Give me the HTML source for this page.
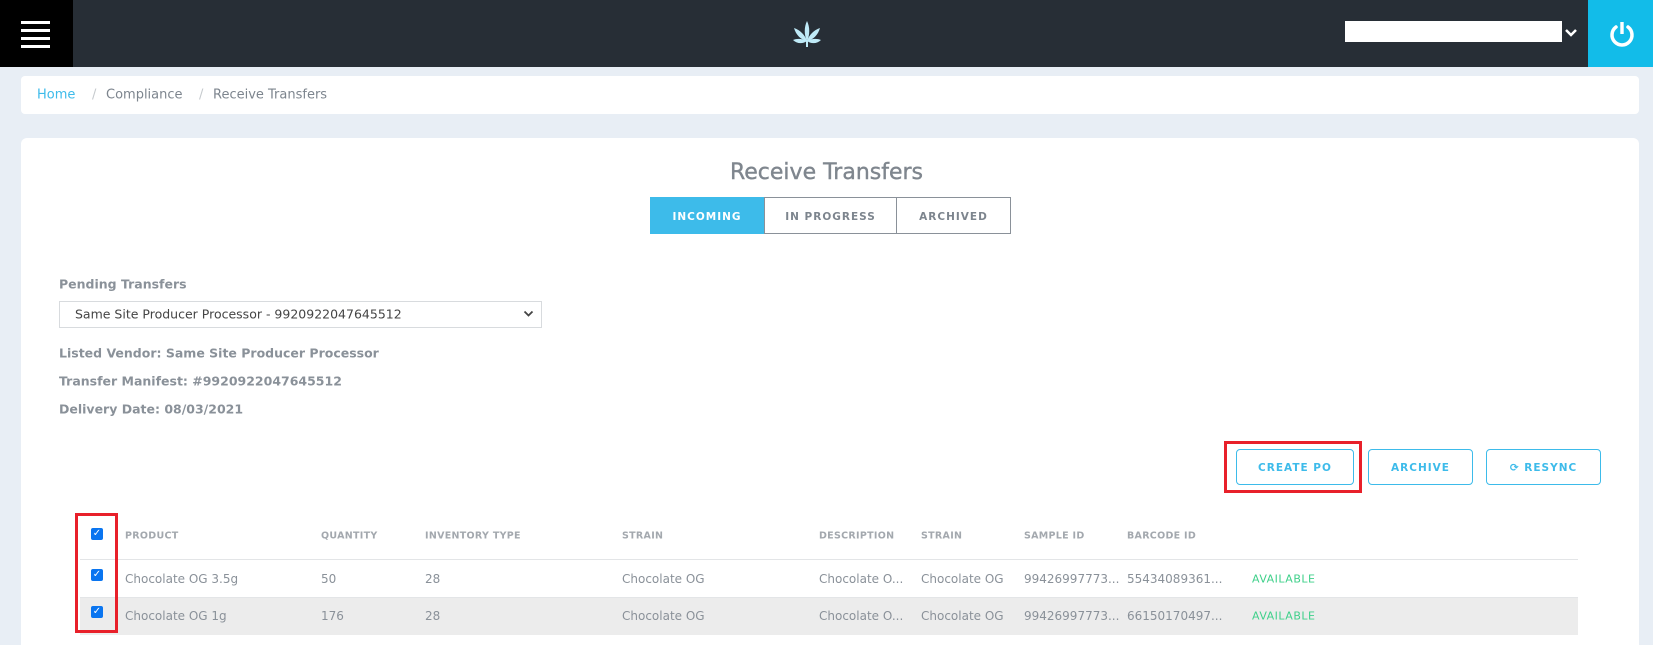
<!DOCTYPE html>
<html style="overflow:hidden;height:645px"><head><meta charset="utf-8"><style>
*{margin:0;padding:0;box-sizing:border-box}
body{width:1653px;height:645px;overflow:hidden;background:#e8eef5;font-family:"DejaVu Sans","Liberation Sans",sans-serif;color:#7d858e;position:relative}
.a{position:absolute;white-space:nowrap}
.hdr{left:0;top:0;width:1653px;height:67px;background:#272e36}
.ham{left:0;top:0;width:73px;height:67px;background:#000}
.ham i{position:absolute;left:21px;width:29px;height:3px;background:#fff}
.pw{left:1588px;top:0;width:65px;height:67px;background:#12bce9}
.bc{left:21px;top:76px;width:1618px;height:38px;background:#fff;border-radius:4px}
.card{left:21px;top:138px;width:1618px;height:507px;background:#fff;border-radius:6px 6px 0 0}
.t{font-size:13px;transform:translateY(-50%)}
.tab{top:197px;height:37px;border:1px solid #8a9199;font-size:10.5px;font-weight:bold;letter-spacing:1px;display:flex;align-items:center;justify-content:center;color:#7d858e;padding-top:3px}
.b{font-weight:bold;font-size:12.5px;color:#8a9199}
.btn{top:449px;height:36px;border:1px solid #3dbbea;border-radius:4px;color:#3dbbea;font-size:10.5px;font-weight:bold;letter-spacing:1px;display:flex;align-items:center;justify-content:center;padding-top:2px}
.th{font-size:9.5px;font-weight:bold;color:#a3a8ae;letter-spacing:.3px;top:536px;transform:translateY(-50%)}
.td{font-size:12px;color:#8a9199;transform:translateY(-50%)}
.cb{width:12px;height:12px;background:#0a75f0;border-radius:2px;color:#fff;font-size:10px;line-height:12px;text-align:center;font-weight:bold}
</style></head><body>
<div class="a hdr"></div>
<div class="a ham"><i style="top:21px"></i><i style="top:29px"></i><i style="top:37px"></i><i style="top:45px"></i></div>
<svg class="a" style="left:791px;top:19px" width="32" height="30" viewBox="0 0 32 30"><g fill="#bfeaf7"><path d="M16 2 C19 8 19 16 16 22 C13 16 13 8 16 2Z"/><path d="M3 9 C9 11 14 16 16 22 C10 21 5 16 3 9Z"/><path d="M29 9 C23 11 18 16 16 22 C22 21 27 16 29 9Z"/><path d="M2 21 C7 19 12 20 16 22 C12 25 6 25 2 21Z"/><path d="M30 21 C25 19 20 20 16 22 C20 25 26 25 30 21Z"/></g><rect x="15" y="21" width="2" height="7" fill="#bfeaf7"/></svg>
<div class="a" style="left:1345px;top:21px;width:217px;height:21px;background:#fff"></div>
<svg class="a" style="left:1564px;top:28px" width="14" height="10" viewBox="0 0 14 10"><path d="M2 2 L7 7 L12 2" stroke="#fff" stroke-width="2.5" fill="none"/></svg>
<div class="a pw"></div>
<svg class="a" style="left:1607px;top:19px" width="30" height="30" viewBox="0 0 30 30"><path d="M9 8 A10 10 0 1 0 21 8" stroke="#fff" stroke-width="3.5" fill="none" stroke-linecap="round"/><rect x="13.3" y="3" width="3.4" height="12" fill="#fff"/></svg>
<div class="a bc"></div>
<div class="a t" style="left:37px;top:95px;color:#3dbbea">Home</div>
<div class="a t" style="left:92px;top:95px;color:#c5c9cd">/</div>
<div class="a t" style="left:106px;top:95px">Compliance</div>
<div class="a t" style="left:199px;top:95px;color:#c5c9cd">/</div>
<div class="a t" style="left:213px;top:95px">Receive Transfers</div>
<div class="a card"></div>
<div class="a" style="left:0;width:1653px;top:160px;text-align:center;font-size:22px;color:#7f868e;-webkit-text-stroke:0.4px #7f868e">Receive Transfers</div>
<div class="a tab" style="left:650px;width:114px;background:#3dbbea;border-color:#3dbbea;color:#fff">INCOMING</div>
<div class="a tab" style="left:764px;width:133px">IN PROGRESS</div>
<div class="a tab" style="left:896px;width:115px">ARCHIVED</div>
<div class="a b t" style="left:59px;top:284px">Pending Transfers</div>
<div class="a" style="left:59px;top:301px;width:483px;height:27px;border:1px solid #d8dbde"></div>
<div class="a t" style="left:75px;top:314px;color:#444;font-size:12.5px">Same Site Producer Processor - 9920922047645512</div>
<svg class="a" style="left:523px;top:310px" width="11" height="8" viewBox="0 0 11 8"><path d="M1.5 1.5 L5.5 5.5 L9.5 1.5" stroke="#444" stroke-width="1.8" fill="none"/></svg>
<div class="a b t" style="left:59px;top:353px">Listed Vendor: Same Site Producer Processor</div>
<div class="a b t" style="left:59px;top:381px">Transfer Manifest: #9920922047645512</div>
<div class="a b t" style="left:59px;top:409px">Delivery Date: 08/03/2021</div>
<div class="a" style="left:1224px;top:441px;width:138px;height:52px;border:3px solid #e8202a"></div>
<div class="a btn" style="left:1236px;width:118px">CREATE PO</div>
<div class="a btn" style="left:1368px;width:105px">ARCHIVE</div>
<div class="a btn" style="left:1486px;width:115px">&#10227;&nbsp;RESYNC</div>
<div class="a" style="left:80px;top:559px;width:1498px;height:1px;background:#e3e5e7"></div>
<div class="a" style="left:80px;top:597px;width:1498px;height:38px;background:#ececec;border-top:1px solid #e3e5e7"></div>
<div class="a" style="left:75px;top:513px;width:43px;height:120px;border:3px solid #e8202a"></div>
<div class="a cb" style="left:91px;top:528px">✓</div>
<div class="a cb" style="left:91px;top:569px">✓</div>
<div class="a cb" style="left:91px;top:606px">✓</div>
<div class="a th" style="left:125px">PRODUCT</div>
<div class="a th" style="left:321px">QUANTITY</div>
<div class="a th" style="left:425px">INVENTORY TYPE</div>
<div class="a th" style="left:622px">STRAIN</div>
<div class="a th" style="left:819px">DESCRIPTION</div>
<div class="a th" style="left:921px">STRAIN</div>
<div class="a th" style="left:1024px">SAMPLE ID</div>
<div class="a th" style="left:1127px">BARCODE ID</div>
<div class="a td" style="left:125px;top:579px">Chocolate OG 3.5g</div>
<div class="a td" style="left:321px;top:579px">50</div>
<div class="a td" style="left:425px;top:579px">28</div>
<div class="a td" style="left:622px;top:579px">Chocolate OG</div>
<div class="a td" style="left:819px;top:579px">Chocolate O...</div>
<div class="a td" style="left:921px;top:579px">Chocolate OG</div>
<div class="a td" style="left:1024px;top:579px">99426997773...</div>
<div class="a td" style="left:1127px;top:579px">55434089361...</div>
<div class="a td" style="left:1252px;top:579px;color:#3fd08a;font-size:11px;letter-spacing:.5px">AVAILABLE</div>
<div class="a td" style="left:125px;top:616px">Chocolate OG 1g</div>
<div class="a td" style="left:321px;top:616px">176</div>
<div class="a td" style="left:425px;top:616px">28</div>
<div class="a td" style="left:622px;top:616px">Chocolate OG</div>
<div class="a td" style="left:819px;top:616px">Chocolate O...</div>
<div class="a td" style="left:921px;top:616px">Chocolate OG</div>
<div class="a td" style="left:1024px;top:616px">99426997773...</div>
<div class="a td" style="left:1127px;top:616px">66150170497...</div>
<div class="a td" style="left:1252px;top:616px;color:#3fd08a;font-size:11px;letter-spacing:.5px">AVAILABLE</div>
</body></html>
